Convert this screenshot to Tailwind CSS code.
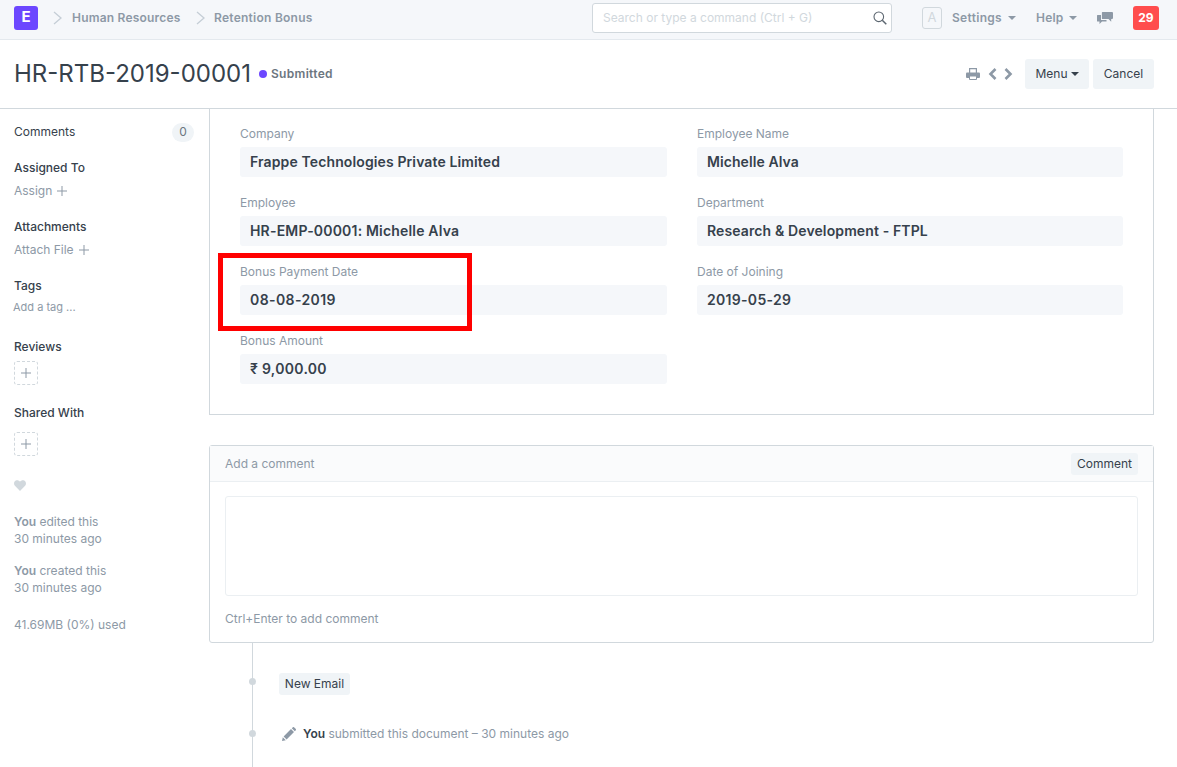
<!DOCTYPE html>
<html lang="en">
<head>
    <meta charset="UTF-8">
    <title>HR-RTB-2019-00001</title>
    <script src="https://cdn.jsdelivr.net/npm/@tailwindcss/browser@4"></script>
</head>
<body class="relative h-[767px] overflow-hidden bg-white font-['Inter',sans-serif] text-[12px] text-[#36414c] antialiased">
    <!-- Navbar -->
    <div class="flex h-[40px] items-center border-b border-[#e4e9ee] bg-[#f5f7fa] pb-[3px] pr-[18px]">
        <div class="mb-[1px] ml-[14px] flex h-[24px] w-[24px] items-center justify-center rounded-[3px] bg-[#6c47ff] text-[15px] font-bold text-white">E</div>
        <svg class="ml-[15px] h-[14px] w-[9px] text-[#c5ced6]" viewBox="0 0 9 14" fill="none" stroke="currentColor" stroke-width="1.3"><path d="M1 1l7 6-7 6"/></svg>
        <span class="ml-[10px] w-[109px] text-[12px] font-semibold tracking-[0.2px] whitespace-nowrap text-[#8d99a6]">Human Resources</span>
        <svg class="ml-[15px] h-[14px] w-[9px] text-[#c5ced6]" viewBox="0 0 9 14" fill="none" stroke="currentColor" stroke-width="1.3"><path d="M1 1l7 6-7 6"/></svg>
        <span class="ml-[9px] text-[12px] font-semibold tracking-[0.25px] text-[#8d99a6]">Retention Bonus</span>

        <div class="ml-auto flex h-[30px] w-[300px] items-center justify-between rounded-[3px] border border-[#d1d8dd] bg-white pl-[10px] pr-[4px] text-[12px] text-[#d1d8dd]">
            <span>Search or type a command (Ctrl + G)</span>
            <svg class="h-[14px] w-[14px] text-[#5c6670]" viewBox="0 0 14 14" fill="none" stroke="currentColor" stroke-width="1.1"><circle cx="5.8" cy="5.8" r="4.8"/><path d="M9.3 9.3l4 4" stroke-width="1.5"/></svg>
        </div>
        <div class="ml-[30px] flex h-[22px] w-[20px] items-center justify-center rounded-[3px] border border-[#d1d8dd] text-[13px] text-[#d1d8dd]">A</div>
        <span class="ml-[10px] w-[51px] font-semibold tracking-[0.3px] text-[#8d99a6]">Settings</span>
        <span class="ml-[5px] h-0 w-0 border-x-[4px] border-t-[4px] border-x-transparent border-t-[#8d99a6]"></span>
        <span class="ml-[20px] w-[28px] font-semibold tracking-[0.2px] text-[#8d99a6]">Help</span>
        <span class="ml-[5px] h-0 w-0 border-x-[4px] border-t-[4px] border-x-transparent border-t-[#8d99a6]"></span>
        <svg class="ml-[20px] h-[13px] w-[16px] text-[#8d99a6]" viewBox="0 0 16 13" fill="currentColor"><path d="M5.500 0h9.500a1 1 0 0 1 1 1v5a1 1 0 0 1-1 1h-.8v2.800L11.500 7h-6a.6.600 0 0 1-.6-.6V.6A.6.600 0 0 1 5.500 0z"/><path d="M.6 3H4v5h5.500v1.500H5L2.500 12V9.500H.6A.6.600 0 0 1 0 8.900V3.600A.6.600 0 0 1 .6 3z"/></svg>
        <div class="ml-[20px] flex h-[24px] w-[26px] items-center justify-center rounded-[3px] bg-[#ff4d4d] text-[12px] font-bold text-white">29</div>
    </div>

    <!-- Page head -->
    <div class="flex h-[69px] items-center border-b border-[#d1d8dd] pl-[14px] pr-[23px]">
        <h1 class="text-[24px] leading-none font-normal text-[#36414c]">HR-RTB-2019-00001</h1>
        <span class="ml-[8px] h-[8px] w-[8px] rounded-full bg-[#6c47ff]"></span>
        <span class="ml-[4px] text-[12px] font-semibold tracking-[0.3px] text-[#6c7680]">Submitted</span>
        <svg class="ml-auto h-[12px] w-[14px] text-[#8d99a6]" viewBox="0 0 14 12"><path d="M3.600 5V.7h6.800V5" fill="none" stroke="currentColor" stroke-width="1.200"/><rect y="4.500" width="14" height="5.500" rx="1" fill="currentColor"/><path d="M3.500 8h7v3.500h-7z" fill="#fff" stroke="currentColor"/></svg>
        <svg class="ml-[8px] h-[12px] w-[9px] text-[#8d99a6]" viewBox="0 0 9 12" fill="none" stroke="currentColor" stroke-width="2.600"><path d="M7.500 1L2.500 6l5 5"/></svg>
        <svg class="ml-[7px] h-[12px] w-[9px] text-[#8d99a6]" viewBox="0 0 9 12" fill="none" stroke="currentColor" stroke-width="2.600"><path d="M1.500 1l5 5-5 5"/></svg>
        <div class="ml-[12px] flex h-[30px] w-[64px] items-center justify-center rounded-[3px] bg-[#f0f4f7]">Menu<span class="ml-[3px] h-0 w-0 border-x-[4px] border-t-[4px] border-x-transparent border-t-[#36414c]"></span></div>
        <div class="ml-[4px] flex h-[30px] w-[61px] items-center justify-center rounded-[3px] bg-[#f0f4f7]">Cancel</div>
    </div>

    <div class="flex">
        <!-- Sidebar -->
        <div class="relative h-[658px] w-[209px] shrink-0 pl-[14px]">
            <div class="flex h-[18px] items-center justify-between pr-[15px] mt-[14px]">
                <span>Comments</span>
                <span class="flex h-[19px] w-[22px] items-center justify-center rounded-full bg-[#f0f4f7] text-[#6c7680]">0</span>
            </div>
            <div class="mt-[18px] font-medium">Assigned To</div>
            <div class="mt-[5px] flex items-center text-[#8d99a6]">Assign<svg class="ml-[5px] h-[10px] w-[10px]" viewBox="0 0 10 10" stroke="currentColor" stroke-width="1"><path d="M5 0v10M0 5h10"/></svg></div>
            <div class="mt-[18px] font-medium">Attachments</div>
            <div class="mt-[5px] flex items-center text-[#8d99a6]">Attach File<svg class="ml-[5px] h-[10px] w-[10px]" viewBox="0 0 10 10" stroke="currentColor" stroke-width="1"><path d="M5 0v10M0 5h10"/></svg></div>
            <div class="mt-[18px] font-medium">Tags</div>
            <div class="ml-[-1px] mt-[4px] text-[11px] text-[#8d99a6]">Add a tag ...</div>
            <div class="mt-[22px] font-medium">Reviews</div>
            <div class="mt-[5px] flex h-[24px] w-[24px] items-center justify-center rounded-[3px] border border-dashed border-[#d1d8dd] text-[#8d99a6]"><svg class="h-[10px] w-[10px]" viewBox="0 0 10 10" stroke="currentColor" stroke-width="1"><path d="M5 0v10M0 5h10"/></svg></div>
            <div class="mt-[19px] font-medium">Shared With</div>
            <div class="mt-[10px] flex h-[24px] w-[24px] items-center justify-center rounded-[3px] border border-dashed border-[#d1d8dd] text-[#8d99a6]"><svg class="h-[10px] w-[10px]" viewBox="0 0 10 10" stroke="currentColor" stroke-width="1"><path d="M5 0v10M0 5h10"/></svg></div>
            <svg class="mt-[24px] h-[11px] w-[12px] text-[#d1d8dd]" viewBox="0 0 12 11" fill="currentColor"><path d="M6 11L.9 5.800C-.6 4.200-.1 1.500 1.800.600 3.300-.1 5 .4 6 1.800 7 .4 8.700-.1 10.200.600c1.900.9 2.400 3.600.9 5.200z"/></svg>
            <div class="mt-[22px] leading-[17px] text-[#8d99a6]"><b class="font-semibold">You</b> edited this<br>30 minutes ago</div>
            <div class="mt-[15px] leading-[17px] text-[#8d99a6]"><b class="font-semibold">You</b> created this<br>30 minutes ago</div>
            <div class="mt-[20px] text-[#8d99a6]">41.69MB (0%) used</div>
        </div>

        <!-- Main -->
        <div class="w-[945px]">
            <div class="grid h-[306px] grid-cols-[427px_426px] content-start gap-x-[30px] border-x border-b border-[#d1d8dd] pl-[30px] pt-[16px]">
                <div class="h-[69px]">
                    <div class="h-[22px] text-[#8d99a6]">Company</div>
                    <div class="flex h-[30px] items-center rounded-[3px] bg-[#f5f7fa] pb-[1px] pl-[10px] text-[14px] font-semibold tracking-[0.12px]">Frappe Technologies Private Limited</div>
                </div>
                <div class="h-[69px]">
                    <div class="h-[22px] text-[#8d99a6]">Employee Name</div>
                    <div class="flex h-[30px] items-center rounded-[3px] bg-[#f5f7fa] pb-[1px] pl-[10px] text-[14px] font-semibold tracking-[0.08px]">Michelle Alva</div>
                </div>
                <div class="h-[69px]">
                    <div class="h-[22px] text-[#8d99a6]">Employee</div>
                    <div class="flex h-[30px] items-center rounded-[3px] bg-[#f5f7fa] pb-[1px] pl-[10px] text-[14px] font-semibold tracking-[0.18px]">HR-EMP-00001: Michelle Alva</div>
                </div>
                <div class="h-[69px]">
                    <div class="h-[22px] text-[#8d99a6]">Department</div>
                    <div class="flex h-[30px] items-center rounded-[3px] bg-[#f5f7fa] pb-[1px] pl-[10px] text-[14px] font-semibold tracking-[0.12px]">Research &amp; Development - FTPL</div>
                </div>
                <div class="h-[69px]">
                    <div class="h-[22px] text-[#8d99a6]">Bonus Payment Date</div>
                    <div class="flex h-[30px] items-center rounded-[3px] bg-[#f5f7fa] pb-[1px] pl-[10px] text-[14px] font-semibold tracking-[0.4px]">08-08-2019</div>
                </div>
                <div class="h-[69px]">
                    <div class="h-[22px] text-[#8d99a6]">Date of Joining</div>
                    <div class="flex h-[30px] items-center rounded-[3px] bg-[#f5f7fa] pb-[1px] pl-[10px] text-[14px] font-semibold tracking-[0.3px]">2019-05-29</div>
                </div>
                <div class="h-[69px]">
                    <div class="h-[22px] text-[#8d99a6]">Bonus Amount</div>
                    <div class="flex h-[30px] items-center rounded-[3px] bg-[#f5f7fa] pb-[1px] pl-[10px] text-[14px] font-semibold tracking-[0.3px]">₹ 9,000.00</div>
                </div>
            </div>

            <!-- Comment box -->
            <div class="mt-[30px] h-[198px] rounded-[3px] border border-[#d1d8dd]">
                <div class="flex h-[36px] items-center justify-between border-b border-[#ebeff2] bg-[#fafbfc] pl-[15px] pr-[15px] text-[#8d99a6]">
                    <span>Add a comment</span>
                    <span class="flex h-[22px] w-[67px] items-center justify-center rounded-[3px] bg-[#f0f4f7] text-[#36414c]">Comment</span>
                </div>
                <div class="mx-[15px] mt-[14px] h-[100px] rounded-[3px] border border-[#ebeff2]"></div>
                <div class="ml-[15px] mt-[14px] text-[#8d99a6]">Ctrl+Enter to add comment</div>
            </div>

            <!-- Timeline -->
            <div class="relative ml-[43px] h-[125px] border-l border-[#d1d8dd]">
                <span class="absolute left-[-4px] top-[35px] h-[7px] w-[7px] rounded-full bg-[#d1d8dd]"></span>
                <span class="absolute left-[-4px] top-[87px] h-[7px] w-[7px] rounded-full bg-[#d1d8dd]"></span>
                <div class="ml-[26px] pt-[30px]">
                    <div class="flex h-[22px] w-[71px] items-center justify-center rounded-[3px] bg-[#f0f4f7]">New Email</div>
                    <div class="mt-[30px] flex items-center text-[#8d99a6]">
                        <svg class="ml-[3px] h-[14px] w-[14px] text-[#8d99a6]" viewBox="0 0 14 14" fill="currentColor"><path d="M0 14l.8-3.800L3.800 13.200zM1.600 9.400L9 2l3 3-7.400 7.400zM9.800 1.200l.8-.8a1.200 1.200 0 0 1 1.700 0l1.300 1.300a1.200 1.200 0 0 1 0 1.700l-.8.800z"/></svg>
                        <span class="ml-[7px]"><b class="font-semibold text-[#36414c]">You</b> submitted this document – 30 minutes ago</span>
                    </div>
                </div>
            </div>
        </div>
    </div>

    <!-- Annotation -->
    <div class="absolute left-[218px] top-[253px] h-[78px] w-[254px] border-[5px] border-[#ff0000]"></div>
</body>
</html>
